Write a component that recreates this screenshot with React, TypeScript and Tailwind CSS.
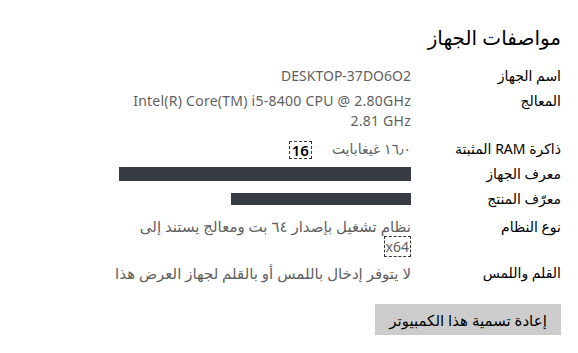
import React from "react";

const Row = ({ label, children, className = "" }: { label: string; children: React.ReactNode; className?: string }) => (
  <div className={`flex ${className}`}>
    <div className="w-[150px] shrink-0 text-black leading-[20px]">{label}</div>
    <div className="w-[292px] text-[#5f5f5f] leading-[20px]">{children}</div>
  </div>
);

export default function App() {
  return (
    <div
      dir="rtl"
      className="w-[578px] h-[353px] bg-white pr-[17px] pt-[23px] text-[14px]"
      style={{ fontFamily: '"Noto Sans", "DejaVu Sans", sans-serif' }}
    >
      <h1 className="text-[20px] leading-[29px] text-black font-normal">مواصفات الجهاز</h1>
      <div className="mt-[14px] flex flex-col">
        <Row label="اسم الجهاز">DESKTOP-37DO6O2</Row>
        <Row label="المعالج" className="mt-[5px]">
          <span dir="ltr" className="block text-right tracking-[0.25px]">Intel(R) Core(TM) i5-8400 CPU @ 2.80GHz 2.81 GHz</span>
        </Row>
        <Row label="ذاكرة RAM المثبتة" className="mt-[8px]">
          <span>١٦٫٠ غيغابايت</span>
          <span className="inline-block mr-[20px] px-[2px] border border-dashed border-[#333] text-black font-semibold text-[15px] leading-[16px] align-middle">16</span>
        </Row>
        <Row label="معرف الجهاز" className="mt-[5px]">
          <div className="h-[20px] flex items-center">
            <div className="w-[292px] h-[14px] bg-[#363a42]" />
          </div>
        </Row>
        <Row label="معرّف المنتج" className="mt-[5px]">
          <div className="h-[20px] flex items-center">
            <div className="w-[180px] h-[12px] bg-[#363a42]" />
          </div>
        </Row>
        <Row label="نوع النظام" className="mt-[8px]">
          <div className="w-[285px] text-[15px] leading-[19px]">
            نظام تشغيل بإصدار ٦٤ بت ومعالج يستند إلى{" "}
            <span className="inline-block border border-dashed border-[#333] px-[1px] text-[14px] leading-[19px]">x64</span>
          </div>
        </Row>
        <Row label="القلم واللمس" className="mt-[6px]">
          <span className="text-[15px] whitespace-nowrap">لا يتوفر إدخال باللمس أو بالقلم لجهاز العرض هذا</span>
        </Row>
      </div>
      <button className="mt-[20px] w-[186px] h-[31px] bg-[#cccccc] text-black text-[15px] flex items-center justify-center">
        إعادة تسمية هذا الكمبيوتر
      </button>
    </div>
  );
}
